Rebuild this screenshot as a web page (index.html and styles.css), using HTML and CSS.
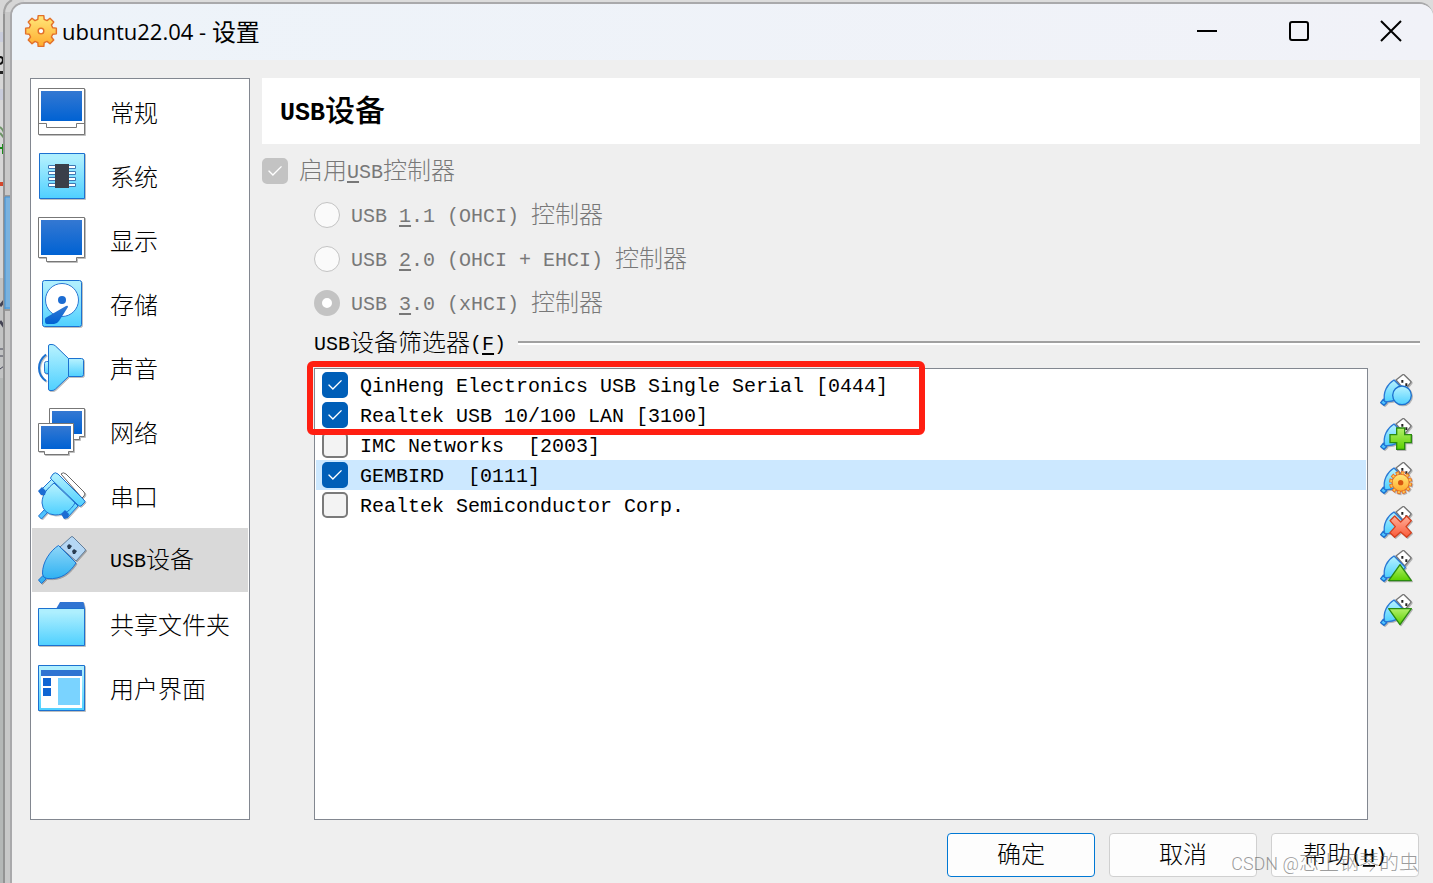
FILE: index.html
```html
<!DOCTYPE html>
<html lang="zh-CN">
<head>
    <meta charset="UTF-8">
    <meta name="viewport" content="width=device-width, initial-scale=1.0">
    <title>ubuntu22.04 - 设置</title>
    <link rel="stylesheet" href="styles.css">
</head>
<body>
    <!-- Shared gradients and shapes -->
    <svg class="defs" width="0" height="0" aria-hidden="true">
        <defs>
            <linearGradient id="cyan" x1="0" y1="0" x2="0" y2="1">
                <stop offset="0.1" stop-color="#aeeffe"/><stop offset="1" stop-color="#4fd0ff"/>
            </linearGradient>
            <linearGradient id="blue" x1="0" y1="0" x2="0" y2="1">
                <stop offset="0" stop-color="#3478d2"/><stop offset="1" stop-color="#0062d3"/>
            </linearGradient>
            <linearGradient id="plug" x1="0" y1="0" x2="0" y2="1">
                <stop offset="0" stop-color="#8fd6f8"/><stop offset="1" stop-color="#2fb2f2"/>
            </linearGradient>
            <linearGradient id="orange" x1="0" y1="0" x2="0" y2="1">
                <stop offset="0" stop-color="#ffe87a"/><stop offset="1" stop-color="#ffab2e"/>
            </linearGradient>
            <linearGradient id="green" x1="0" y1="0" x2="0" y2="1">
                <stop offset="0" stop-color="#b2f06a"/><stop offset="1" stop-color="#5cd000"/>
            </linearGradient>
            <linearGradient id="red" x1="0" y1="0" x2="0" y2="1">
                <stop offset="0" stop-color="#ffb09a"/><stop offset="1" stop-color="#fa5a38"/>
            </linearGradient>
            <path id="gear" d="M-4.5-16.5L-4-21.7H4L4.5-16.5 8.500-14.7 12.7-18 18-12.7 14.7-8.500 16.5-4.5 21.7-4V4L16.5 4.5 14.7 8.500 18 12.7 12.7 18 8.500 14.7 4.5 16.5 4 21.7H-4L-4.5 16.5-8.500 14.7-12.7 18-18 12.7-14.7 8.500-16.5 4.5-21.7 4V-4L-16.5-4.5-14.7-8.500-18-12.7-12.7-18-8.500-14.7Z"/>
            <symbol id="usb-small" viewBox="0 0 48 48">
                <path d="M24 9L34 1Q35 0 36 1L46 11Q47 12 46 13L37 24Z" fill="#fff" stroke="#777" stroke-width="2"/>
                <path d="M32 9h3v4h-3zM38 14h3v4h-3z" fill="#222"/>
                <path d="M1 43L5 38 10 43 6 47Z" fill="#4fc4ff" stroke="#1c71d0" stroke-width="2"/>
                <path d="M21 9L38 26C32 36 20 43 7 41C4 27 11 15 21 9Z" fill="url(#cyan)" stroke="#2a78d4" stroke-width="2"/>
            </symbol>
        </defs>
    </svg>

    <!-- Slice of the windows behind the dialog -->
    <svg class="backdrop" width="24" height="100%" aria-hidden="true">
        <rect width="24" height="100%" fill="#d6d6d6"/>
        <rect y="278" width="5" height="100" fill="#c2c3c3"/>
        <rect y="378" width="5" height="100%" fill="#b4b7b6"/>
        <rect y="32" width="5" height="10" fill="#c9ccdb"/>
        <rect y="89" width="5" height="11" fill="#c9ccdb"/>
        <path d="M0 57q3 0 3 3t-3 4" fill="none" stroke="#111" stroke-width="2"/>
        <rect y="71" width="5" height="3" fill="#222"/>
        <path d="M0 127q4 3 5 10M0 133l5 6" fill="none" stroke="#6d9466" stroke-width="2"/>
        <path d="M0 148h4M3 144v10" stroke="#1c8a1c" stroke-width="2"/>
        <rect y="182" width="5" height="4" fill="#d4472c"/>
        <path d="M5 300L0 306M0 321l5 7" stroke="#445" stroke-width="3"/>
        <path d="M0 349h5M0 356h4v10l-4 3" fill="none" stroke="#445" stroke-width="1"/>
        <rect x="5" y="12" width="7" height="100%" fill="#c8c8c8"/>
        <rect x="3" y="12" width="2" height="100%" fill="#939393"/>
        <path d="M4 14Q4 4 12 0" fill="none" stroke="#a5a5a5" stroke-width="2"/>
        <rect x="5" y="195" width="7" height="116" fill="#999"/>
        <rect x="5" y="197" width="7" height="112" fill="#7ab2de"/>
        <path d="M5 309V197h7M5 308h7" fill="none" stroke="#3e93da" stroke-width="1"/>
    </svg>

    <div class="window">
        <header class="titlebar">
            <svg class="app-icon" viewBox="0 0 48 48" aria-hidden="true">
                <use href="#gear" x="24" y="24" fill="url(#orange)" stroke="#e2702a" stroke-width="2" stroke-linejoin="round"/>
                <circle cx="24" cy="24" r="4" fill="#fff" stroke="#e2702a" stroke-width="2"/>
            </svg>
            <h1>ubuntu22.04 - <span class="zh">设置</span></h1>
            <div class="window-buttons">
                <button type="button" aria-label="最小化"><svg viewBox="0 0 20 20"><path d="M0 10h20"/></svg></button>
                <button type="button" aria-label="最大化"><svg viewBox="0 0 20 20"><rect x="1" y="1" width="18" height="18" rx="2"/></svg></button>
                <button type="button" aria-label="关闭"><svg viewBox="0 0 20 20"><path d="M0 0L20 20M20 0L0 20"/></svg></button>
            </div>
        </header>

        <div class="content">
            <nav class="sidebar">
                <a href="#general">
                    <svg viewBox="0 0 48 48"><path d="M.5.5H46.5V46.5H.5Z" fill="#fff" stroke="#777"/><path d="M3 3H44V33H3Z" fill="url(#blue)"/><path d="M.5 35.5H8.5V39.5H38.5V35.5H46.5" fill="none" stroke="#777"/></svg>
                    <span class="zh">常规</span>
                </a>
                <a href="#system">
                    <svg viewBox="0 0 48 48"><path d="M1.5 1.5H46.5V46.5H1.5Z" fill="url(#cyan)" stroke="#1c71d0"/><path d="M10.5 13.5h27v3h-27zM10.5 19.5h27v3h-27zM10.5 25.5h27v3h-27zM10.5 31.5h27v3h-27z" fill="#fff" stroke="#3f78b4"/><path d="M17 12H31V36H17Z" fill="#3a3f49"/></svg>
                    <span class="zh">系统</span>
                </a>
                <a href="#display">
                    <svg viewBox="0 0 48 48"><path d="M.5 1.5H46.5V41.5H38.5V45.5H8.5V41.5H.5Z" fill="#fff" stroke="#777"/><path d="M3 4H44V39H3Z" fill="url(#blue)"/></svg>
                    <span class="zh">显示</span>
                </a>
                <a href="#storage">
                    <svg viewBox="0 0 48 48"><rect x="4.5" y=".5" width="39" height="46" rx="2" fill="url(#cyan)" stroke="#1c71d0"/><circle cx="24" cy="20" r="16.5" fill="#fff" stroke="#2a78d4"/><circle cx="24" cy="20" r="4" fill="#1c6cd2"/><path d="M28 26Q30 25 30 27L21 41Q19 44 16 44H9Q7 44 7 41V39Q7 38 9 37Z" fill="url(#blue)"/></svg>
                    <span class="zh">存储</span>
                </a>
                <a href="#audio">
                    <svg viewBox="0 0 48 48"><path d="M8 10.5Q1 16 1 24T8 37" fill="none" stroke="#1c71d0" stroke-width="2"/><rect x="6.5" y="17.5" width="8" height="12" rx="2" fill="url(#cyan)" stroke="#2a78d4"/><rect x="28.5" y="14.5" width="17" height="18" rx="2" fill="url(#cyan)" stroke="#1c71d0"/><path d="M10.5 2Q10.5.5 12 .5H14Q16 .5 17.5 2L30.5 14.5V32.5L17.5 45Q16 46.5 14 46.5H12Q10.5 46.5 10.5 45Z" fill="url(#cyan)" stroke="#1c71d0"/></svg>
                    <span class="zh">声音</span>
                </a>
                <a href="#network">
                    <svg viewBox="0 0 48 48"><path d="M11.5.5H46.5V28.5H41.5V31.5H11.5Z" fill="#fff" stroke="#777"/><path d="M14 3H44V26H14Z" fill="url(#blue)"/><path d="M.5 15.5H35.5V43.5H30.5V46.5H6.5V43.5H.5Z" fill="#fff" stroke="#777"/><path d="M3 18H33V41H3Z" fill="url(#blue)"/></svg>
                    <span class="zh">网络</span>
                </a>
                <a href="#serial">
                    <svg viewBox="0 0 48 48"><path d="M23 2Q25-.5 28 2L46 20Q48 22 46 24L44 26Z" fill="#fff" stroke="#666"/><path d="M.5 44L7 37 10 40 3.5 47Z" fill="#4fc4ff" stroke="#1c71d0"/><path d="M3 18L14 7 19 13 9 23ZM25 40L35 29 40 34 30 45Z" fill="url(#cyan)" stroke="#1c71d0"/><path d="M16 11L37 31C33 38 27 43 17 43Q5 42 4 31C4 22 10 16 16 11Z" fill="url(#cyan)" stroke="#1c71d0"/><path d="M13 5L15 2Q17-.5 20 2L46 28Q48 30 46 31L43 34Q42 35 40 33L13 7Q12 6 13 5Z" fill="url(#cyan)" stroke="#1c71d0"/><path d="M0 19L4 15 8 19 7 23 3 23ZM23 42L27 38 31 42 30 46 26 47Z" fill="#1c6cd2"/></svg>
                    <span class="zh">串口</span>
                </a>
                <a href="#usb" class="active" aria-current="page">
                    <svg viewBox="0 0 48 48"><path d="M22 11L33 1Q34 0 35 1L47 13Q48 14 47 15L38 25Z" fill="#b5d7f4" stroke="#617d99"/><path d="M29 10l2-2 3 2-2 3-2 0zM34 15l2-2 3 2-2 3-2 0z" fill="#2a3d52"/><path d="M.5 44L5 39.5 8 43 3.5 47.500Z" fill="#35b0f0" stroke="#1c71d0"/><path d="M20.5 9.5L38 27C32 36 24 44 9 42.500Q5 42 4.5 38C4 26 13 14 20.5 9.5Z" fill="url(#plug)" stroke="#1c71d0"/></svg>
                    <span class="label">USB<span class="zh">设备</span></span>
                </a>
                <a href="#shared">
                    <svg viewBox="0 0 48 48"><path d="M18 9L22 2H45.5L47 8V10Z" fill="#2f74d2"/><path d="M.5 8.5H46.5V45.5H.5Z" fill="url(#cyan)" stroke="#1c71d0"/></svg>
                    <span class="zh">共享文件夹</span>
                </a>
                <a href="#interface">
                    <svg viewBox="0 0 48 48"><path d="M.5 1.5H46.5V46.5H.5Z" fill="url(#cyan)" stroke="#1c71d0"/><path d="M3 6H44V44H3Z" fill="#fff"/><path d="M3 6H44V12H3Z" fill="#2f74d2"/><path d="M5 14h8v8H5zM5 24h8v8H5z" fill="#0f66d3"/><path d="M20 14H42V41H20Z" fill="#7ad3ff"/></svg>
                    <span class="zh">用户界面</span>
                </a>
            </nav>

            <main class="page" id="usb">
                <h2>USB<span class="zh">设备</span></h2>

                <label class="option disabled">
                    <input type="checkbox" checked disabled>
                    <span class="label"><span class="zh">启用</span><u>U</u>SB<span class="zh">控制器</span></span>
                </label>

                <div class="usb-settings">
                    <label class="option disabled">
                        <input type="radio" name="controller" disabled>
                        <span class="label">USB <u>1</u>.1 (OHCI) <span class="zh">控制器</span></span>
                    </label>
                    <label class="option disabled">
                        <input type="radio" name="controller" disabled>
                        <span class="label">USB <u>2</u>.0 (OHCI + EHCI) <span class="zh">控制器</span></span>
                    </label>
                    <label class="option disabled">
                        <input type="radio" name="controller" checked disabled>
                        <span class="label">USB <u>3</u>.0 (xHCI) <span class="zh">控制器</span></span>
                    </label>

                    <div class="filters-title">
                        <h3 class="label">USB<span class="zh">设备筛选器</span>(<u>F</u>)</h3>
                        <div class="line"></div>
                    </div>

                    <div class="filters">
                        <div class="filter-list">
                            <label><input type="checkbox" checked><span class="label">QinHeng Electronics USB Single Serial [0444]</span></label>
                            <label><input type="checkbox" checked><span class="label">Realtek USB 10/100 LAN [3100]</span></label>
                            <label><input type="checkbox"><span class="label">IMC Networks  [2003]</span></label>
                            <label class="selected"><input type="checkbox" checked><span class="label">GEMBIRD  [0111]</span></label>
                            <label><input type="checkbox"><span class="label">Realtek Semiconductor Corp.</span></label>
                            <div class="highlight"></div>
                        </div>
                        <div class="toolbar">
                            <button type="button" aria-label="添加空筛选器">
                                <svg viewBox="0 0 48 48"><use href="#usb-small"/><circle cx="33" cy="32" r="14" fill="url(#cyan)" stroke="#1c71d0" stroke-width="2"/></svg>
                            </button>
                            <button type="button" aria-label="从设备添加筛选器">
                                <svg viewBox="0 0 48 48"><use href="#usb-small"/><path d="M25 15H37V25H47V37H37V47H25V37H15V25H25Z" fill="url(#green)" stroke="#2a8a10" stroke-width="2"/></svg>
                            </button>
                            <button type="button" aria-label="编辑筛选器">
                                <svg viewBox="0 0 48 48"><use href="#usb-small"/><circle cx="31" cy="31" r="14.5" fill="none" stroke="#e2702a" stroke-width="6" stroke-dasharray="5.2 2.39"/><circle cx="31" cy="31" r="13" fill="url(#orange)" stroke="#e2702a" stroke-width="2"/><circle cx="31" cy="31" r="14.5" fill="none" stroke="#ffc548" stroke-width="3" stroke-dasharray="3.2 4.39" stroke-dashoffset="-1"/><circle cx="31" cy="31" r="4" fill="#d8560f"/></svg>
                            </button>
                            <button type="button" aria-label="删除筛选器">
                                <svg viewBox="0 0 48 48"><use href="#usb-small"/><path d="M22 15L31 24 40 15 47 22 39 31 47 40 40 47 31 39 22 47 15 40 23 31 15 22Z" fill="url(#red)" stroke="#d5401f" stroke-width="2" stroke-linejoin="round"/></svg>
                            </button>
                            <button type="button" aria-label="上移筛选器">
                                <svg viewBox="0 0 48 48"><use href="#usb-small"/><path d="M30 22L47 46H13Z" fill="url(#green)" stroke="#2a8a10" stroke-width="2" stroke-linejoin="round"/></svg>
                            </button>
                            <button type="button" aria-label="下移筛选器">
                                <svg viewBox="0 0 48 48"><use href="#usb-small"/><path d="M30 46L47 22H13Z" fill="url(#green)" stroke="#2a8a10" stroke-width="2" stroke-linejoin="round"/></svg>
                            </button>
                        </div>
                    </div>
                </div>
            </main>
        </div>

        <footer class="actions">
            <button type="button" class="default"><span class="zh">确定</span></button>
            <button type="button"><span class="zh">取消</span></button>
            <button type="button"><span class="zh">帮助</span>(<u>H</u>)</button>
        </footer>
    </div>

    <div class="watermark">CSDN @<span>恋上钢琴的虫</span></div>
</body>
</html>
```

FILE: styles.css
```css
/* General styles */
* {
    box-sizing: border-box;
}

body {
    margin: 0;
    min-height: 100vh;
    position: relative;
    display: flex;
    padding: 2px 0 0 10px;
    background-color: #dcdcdc;
    font-family: "Liberation Mono", "Noto Sans CJK SC", monospace;
    font-size: 20px; /* half-width letters take 12px */
    line-height: 30px;
    color: #000;
}

h1, h2, h3 {
    margin: 0;
    font-weight: normal;
}

button {
    font: inherit;
    color: inherit;
    border: none;
    padding: 0;
    background: none;
    cursor: pointer;
}

u {
    text-underline-offset: 3px;
}

.zh {
    font-family: "Noto Sans CJK SC", sans-serif;
    font-size: 24px;
    font-weight: 300;
    line-height: 24px;
    vertical-align: -1px;
}

/* Letters sit a little below the middle of the row */
.label {
    padding-top: 3px;
}

.defs,
.backdrop {
    position: absolute;
    top: 0;
    left: 0;
}

.window {
    position: relative;
    flex: 1;
    display: flex;
    flex-direction: column;
    border: 2px solid #a9a9ab;
    border-width: 2px 0 0 2px;
    border-radius: 14px 14px 0 0;
    background-color: #efefef;
    overflow: hidden;
}

/* Title bar */
.titlebar {
    display: flex;
    align-items: center;
    height: 56px;
    padding: 0 32px 2px 12px;
    background: linear-gradient(to right, #edf3f9, #f1f2f8);
}

.app-icon {
    width: 34px;
    height: 34px;
    margin-right: 4px;
}

.titlebar h1 {
    flex: 1;
    font-family: "Open Sans", "Noto Sans CJK SC", sans-serif;
    font-size: 22px;
}

.titlebar .zh {
    font-weight: 400;
}

.window-buttons {
    display: flex;
    gap: 72px;
}

.window-buttons svg {
    display: block;
    width: 20px;
    height: 20px;
    fill: none;
    stroke: #000;
    stroke-width: 2;
    overflow: visible;
}

/* Sidebar */
.content {
    flex: 1;
    display: flex;
    gap: 12px;
    padding: 18px 13px 13px 18px;
}

.sidebar {
    width: 220px;
    padding: 1px;
    border: 1px solid #828790;
    background-color: #fff;
}

.sidebar a {
    display: flex;
    align-items: center;
    gap: 24px;
    height: 64px;
    padding-left: 6px;
    color: #000;
    text-decoration: none;
    white-space: nowrap;
}

.sidebar a.active {
    background-color: #d9d9d9;
}

.sidebar svg {
    width: 48px;
    height: 48px;
    overflow: visible;
    filter: drop-shadow(1px 1px 0 rgba(0, 0, 0, 0.25));
}

/* Settings page */
.page {
    flex: 1;
    display: flex;
    flex-direction: column;
}

.page h2 {
    height: 66px;
    margin-bottom: 5px;
    padding: 3px 18px 0;
    background-color: #fff;
    font-size: 25px;
    font-weight: bold;
    line-height: 66px;
}

.page h2 .zh {
    font-size: 30px;
    font-weight: 500;
}

.option {
    display: flex;
    align-items: center;
    gap: 11px;
    height: 44px;
    white-space: pre;
}

.option.disabled {
    color: #787878;
}

.usb-settings {
    flex: 1;
    display: flex;
    flex-direction: column;
    margin-left: 52px;
}

input {
    appearance: none;
    display: grid;
    place-items: center;
    flex: none;
    width: 26px;
    height: 26px;
    margin: 0;
    border: 2px solid #7a7a7a;
    border-radius: 5px;
    background-color: #f3f3f3;
}

input[type="checkbox"]:checked {
    border-color: #005fb8;
    background-color: #005fb8;
}

/* Tick mark */
input[type="checkbox"]:checked::after {
    content: "";
    width: 14px;
    height: 10px;
    background-color: #fff;
    clip-path: polygon(0 50%, 8% 42%, 35% 80%, 93% 0, 100% 8%, 35% 100%);
}

input[type="radio"] {
    border: 1px solid #c3c3c3;
    border-radius: 50%;
    background-color: #fafafa;
}

input[type="radio"]:checked {
    border: 8px solid #c3c3c3;
    background-color: #fff;
}

input[type="checkbox"]:disabled {
    border-color: #c3c3c3;
    background-color: #c3c3c3;
}

/* Device filters */
.filters-title {
    display: flex;
    align-items: center;
    gap: 12px;
    height: 36px;
    margin-bottom: 7px;
}

.filters-title h3 {
    font-size: 20px;
}

.line {
    flex: 1;
    height: 4px;
    border-top: 2px solid #a0a0a0;
    background-color: #fff;
}

.filters {
    flex: 1;
    display: flex;
}

.filter-list {
    position: relative;
    flex: 1;
    padding: 1px;
    border: 1px solid #828790;
    background-color: #fff;
}

.filter-list label {
    display: flex;
    align-items: center;
    gap: 12px;
    height: 30px;
    padding-left: 6px;
    white-space: pre;
}

.filter-list label.selected {
    background-color: #cce8ff;
}

/* Red frame over the first two filters */
.highlight {
    position: absolute;
    top: -8px;
    left: -8px;
    width: 618px;
    height: 74px;
    border: 6px solid #ff1f12;
    border-radius: 6px;
    pointer-events: none;
}

.toolbar {
    display: flex;
    flex-direction: column;
    width: 52px;
    padding-left: 12px;
}

.toolbar button {
    display: flex;
    align-items: center;
    height: 44px;
}

.toolbar svg {
    width: 32px;
    height: 32px;
    overflow: visible;
    filter: drop-shadow(1px 1px 0 rgba(0, 0, 0, 0.25));
}

/* Bottom buttons */
.actions {
    display: flex;
    justify-content: flex-end;
    gap: 14px;
    padding: 0 14px 6px;
}

.actions button {
    width: 148px;
    height: 44px;
    padding-top: 3px;
    border: 1px solid #d0d0d0;
    border-radius: 4px;
    background-color: #fdfdfd;
}

.actions button.default {
    border-color: #0078d4;
}

.watermark {
    position: absolute;
    right: 14px;
    bottom: 4px;
    font-family: Roboto, "Noto Sans CJK SC", sans-serif;
    font-size: 18px;
    font-weight: 300;
    color: rgba(90, 90, 90, 0.6);
    pointer-events: none;
}

.watermark span {
    font-size: 20px;
}
```
